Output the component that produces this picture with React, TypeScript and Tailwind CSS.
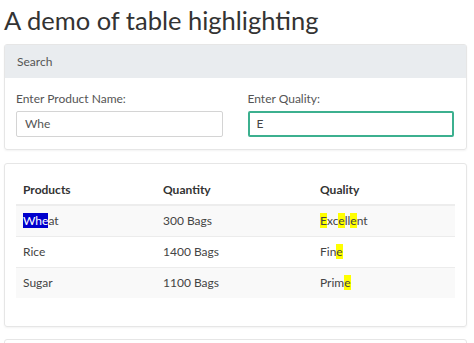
const products = [
  { name: 'Wheat', qty: '300 Bags', quality: 'Excellent' },
  { name: 'Rice', qty: '1400 Bags', quality: 'Fine' },
  { name: 'Sugar', qty: '1100 Bags', quality: 'Prime' },
];

// wrap matching letters; the product column matches the prefix, quality matches every letter
function markPrefix(text: string, term: string) {
  if (!term || !text.toLowerCase().startsWith(term.toLowerCase())) return text;
  return (
    <>
      <span className="bg-[#0000cd] text-white">{text.slice(0, term.length)}</span>
      {text.slice(term.length)}
    </>
  );
}

function markAll(text: string, term: string) {
  if (!term) return text;
  return text.split('').map((ch, i) =>
    ch.toLowerCase() === term.toLowerCase() ? (
      <span key={i} className="bg-[#ffff00]">{ch}</span>
    ) : (
      <span key={i}>{ch}</span>
    )
  );
}

export default function App() {
  const productTerm = 'Whe';
  const qualityTerm = 'E';

  return (
    <div className="min-h-screen bg-white pl-[4px] pr-[7px] font-['Lato','Liberation_Sans',sans-serif] text-[#444]">
      <h1 className="mt-[5px] mb-[8px] text-[25.5px] leading-[31px] text-[#333]">A demo of table highlighting</h1>

      {/* Search card */}
      <div className="rounded-[3px] border border-[#e6e6e6] shadow-[0_1px_2px_rgba(0,0,0,0.05)]">
        <div className="h-[33px] bg-[#e9ecef] pl-[12px] text-[12px] leading-[33px] text-[#555]">Search</div>
        <div className="flex gap-[25px] pl-[11px] pr-[12px] pt-[12px] pb-[12px]">
          <div className="flex-1">
            <label className="block mb-[3px] text-[12px] leading-[18px] text-[#555]">Enter Product Name:</label>
            <div className="h-[26px] rounded-[2px] border border-[#d4d4d4] pl-[8px] text-[12px] leading-[24px] text-[#555]">
              {productTerm}
            </div>
          </div>
          <div className="flex-1">
            <label className="block mb-[3px] text-[12px] leading-[18px] text-[#555]">Enter Quality:</label>
            <div className="h-[26px] rounded-[2px] border-2 border-[#3cb08f] pl-[7px] text-[12px] leading-[22px] text-[#444]">
              {qualityTerm}
            </div>
          </div>
        </div>
      </div>

      {/* Table card */}
      <div className="mt-[13px] rounded-[3px] border border-[#e6e6e6] px-[11px] pt-[11px] pb-[28px] shadow-[0_1px_2px_rgba(0,0,0,0.05)]">
        <table className="w-full border-collapse text-left text-[12px]">
          <thead>
            <tr className="h-[30px] border-b-2 border-[#ededed]">
              <th className="w-[140px] pl-[7px] font-bold text-[#333]">Products</th>
              <th className="w-[157px] pl-[7px] font-bold text-[#333]">Quantity</th>
              <th className="pl-[7px] font-bold text-[#333]">Quality</th>
            </tr>
          </thead>
          <tbody>
            {products.map((p, i) => (
              <tr
                key={p.name}
                className={`h-[31px] ${i < products.length - 1 ? 'border-b border-[#ececec]' : ''} ${i % 2 === 0 ? 'bg-[#f9f9f9]' : 'bg-white'}`}
              >
                <td className="pl-[7px]">{markPrefix(p.name, productTerm)}</td>
                <td className="pl-[7px]">{p.qty}</td>
                <td className="pl-[7px]">{markAll(p.quality, qualityTerm)}</td>
              </tr>
            ))}
          </tbody>
        </table>
      </div>

      {/* next card, cut off */}
      <div className="mt-[12px] h-[40px] rounded-[3px] border border-[#e6e6e6]" />
    </div>
  );
}
